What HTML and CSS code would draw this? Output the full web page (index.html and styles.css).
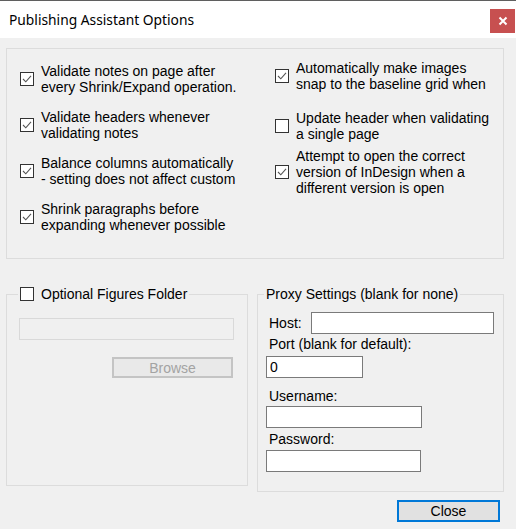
FILE: index.html
```html
<!DOCTYPE html>
<html lang="en">
<head>
  <meta charset="UTF-8" />
  <meta name="viewport" content="width=device-width, initial-scale=1.0"/>
  <title>Publishing Assistant Options</title>
  <link rel="stylesheet" href="styles.css">
</head>
<body>

  <div class="window">
    <header class="titlebar">
      <span class="title">Publishing Assistant Options</span>
      <button class="close-x" aria-label="Close">
        <svg width="10" height="10" viewBox="0 0 10 10"><path d="M1.5 1.5 L8.5 8.5 M8.5 1.5 L1.5 8.5" stroke="#fff" stroke-width="2"/></svg>
      </button>
    </header>

    <main class="content">
      <section class="options">
        <div class="col col-left">
          <label class="opt"><span class="box checked"></span><span>Validate notes on page after<br>every Shrink/Expand operation.</span></label>
          <label class="opt"><span class="box checked"></span><span>Validate headers whenever<br>validating notes</span></label>
          <label class="opt"><span class="box checked"></span><span>Balance columns automatically<br>- setting does not affect custom</span></label>
          <label class="opt"><span class="box checked"></span><span>Shrink paragraphs before<br>expanding whenever possible</span></label>
        </div>
        <div class="col col-right">
          <label class="opt"><span class="box checked"></span><span>Automatically make images<br>snap to the baseline grid when</span></label>
          <label class="opt opt-2"><span class="box"></span><span>Update header when validating<br>a single page</span></label>
          <label class="opt opt-3"><span class="box checked"></span><span>Attempt to open the correct<br>version of InDesign when a<br>different version is open</span></label>
        </div>
      </section>

      <div class="groups">
        <fieldset class="group group-figures">
          <legend><span class="box"></span>Optional Figures Folder</legend>
          <input type="text" class="field-disabled" disabled>
          <button class="browse" disabled>Browse</button>
        </fieldset>

        <fieldset class="group group-proxy">
          <legend>Proxy Settings (blank for none)</legend>
          <div class="host-row">
            <span class="lbl">Host:</span>
            <input type="text" class="field host">
          </div>
          <div class="lbl lbl-port">Port (blank for default):</div>
          <input type="text" class="field port" value="0">
          <div class="lbl lbl-user">Username:</div>
          <input type="text" class="field user">
          <div class="lbl lbl-pass">Password:</div>
          <input type="password" class="field pass">
        </fieldset>
      </div>

      <div class="footer">
        <button class="close-btn">Close</button>
      </div>
    </main>
  </div>

</body>
</html>
```

FILE: styles.css
```css
html, body {
  margin: 0;
  padding: 0;
}

body {
  width: 516px;
  height: 529px;
  overflow: hidden;
  font-family: "Liberation Sans", Arial, sans-serif;
  font-size: 14px;
  line-height: 16px;
  color: #000;
  background: #f0f0f0;
}

.window {
  border-top: 1px solid #5f5f5f;
}

.titlebar {
  display: flex;
  justify-content: space-between;
  height: 37px;
  background: #fff;
}

.title {
  font-family: "Noto Sans", "Open Sans", sans-serif;
  font-size: 13.8px;
  line-height: 37px;
  padding-left: 9px;
  color: #000;
}

.close-x {
  width: 25px;
  height: 24px;
  margin-top: 8px;
  margin-right: 1px;
  border: none;
  padding: 0;
  background: #c75050;
  display: flex;
  align-items: center;
  justify-content: center;
}

.content {
  padding: 10px 0 0 6px;
}

/* check boxes */
.box {
  flex: none;
  display: inline-block;
  box-sizing: border-box;
  width: 14px;
  height: 14px;
  border: 1px solid #333;
  background: #fff;
}

.box.checked {
  background: #fff url("data:image/svg+xml,%3Csvg xmlns='http://www.w3.org/2000/svg' width='12' height='12'%3E%3Cpath d='M2 6 L4.8 8.8 L10 2.8' fill='none' stroke='%23555' stroke-width='1.1'/%3E%3C/svg%3E") no-repeat center;
}

.options {
  box-sizing: border-box;
  width: 498px;
  height: 211px;
  border: 1px solid #dcdcdc;
  display: grid;
  grid-template-columns: 255px 1fr;
  padding-left: 13px;
}

.col {
  display: flex;
  flex-direction: column;
}

.col-left {
  padding-top: 14px;
  gap: 14px;
}

.col-right {
  padding-top: 11px;
}

.opt {
  display: flex;
  align-items: center;
  gap: 7px;
  white-space: nowrap;
}

.opt-2 {
  margin-top: 18px;
}

.opt-3 {
  margin-top: 6px;
}

/* lower group boxes */
.groups {
  display: flex;
  align-items: flex-start;
  gap: 9px;
  margin-top: 27px;
}

.group {
  box-sizing: border-box;
  margin: 0;
  padding: 0;
  border: 1px solid #dcdcdc;
  display: flex;
  flex-direction: column;
  align-items: flex-start;
}

.group legend {
  padding: 0 2px;
  line-height: 16px;
  display: flex;
  align-items: center;
  gap: 7px;
}

.group-figures {
  width: 242px;
  height: 200px;
}

.group-figures legend {
  margin-left: 11px;
}

.group-proxy {
  width: 247px;
  height: 206px;
}

.group-proxy legend {
  margin-left: 6px;
}

.field-disabled {
  box-sizing: border-box;
  width: 215px;
  height: 22px;
  margin: 16px 0 0 12px;
  border: 1px solid #d9d9d9;
  background: #f0f0f0;
}

.browse {
  box-sizing: border-box;
  width: 121px;
  height: 21px;
  margin: 17px 0 0 105px;
  padding: 0;
  border: 2px solid #c4c4c4;
  background: #e9e9e9;
  color: #a3a3a3;
  font-family: "Liberation Sans", Arial, sans-serif;
  font-size: 14px;
}

.field {
  box-sizing: border-box;
  height: 22px;
  margin-left: 8px;
  padding: 0 3px;
  border: 1px solid #7a7a7a;
  background: #fff;
  font-family: "Liberation Sans", Arial, sans-serif;
  font-size: 14px;
  color: #000;
  outline: none;
}

.lbl {
  padding-left: 11px;
}

.host-row {
  display: flex;
  align-items: center;
  margin-top: 10px;
}

.host-row .lbl {
  width: 42px;
}

.host-row .field {
  margin-left: 0;
  width: 183px;
}

.lbl-port {
  margin-top: 2px;
}

.port {
  width: 97px;
  margin-top: 4px;
}

.lbl-user {
  margin-top: 10px;
}

.user {
  width: 156px;
  margin-top: 2px;
}

.lbl-pass {
  margin-top: 3px;
}

.pass {
  width: 155px;
  margin-top: 3px;
}

.footer {
  display: flex;
  justify-content: flex-end;
  padding-right: 16px;
  margin-top: 8px;
}

.close-btn {
  box-sizing: border-box;
  width: 103px;
  height: 22px;
  padding: 0;
  border: 2px solid #0078d7;
  background: #e1e1e1;
  font-family: "Liberation Sans", Arial, sans-serif;
  font-size: 14px;
  color: #000;
}
```
